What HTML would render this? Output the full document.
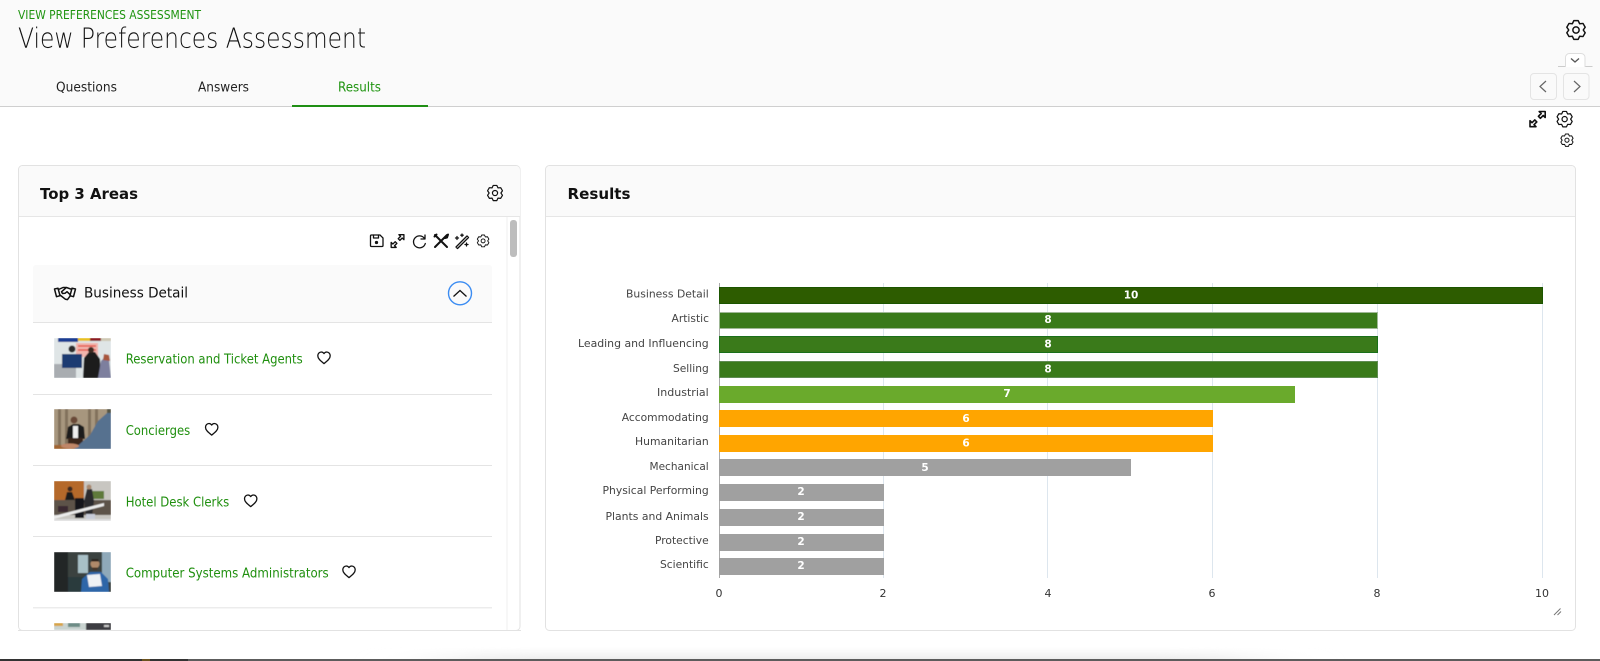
<!DOCTYPE html>
<html lang="en"><head><meta charset="utf-8"><title>View Preferences Assessment</title>
<style>
html,body{margin:0;padding:0;background:#fff;width:1600px;height:661px;overflow:hidden}
svg{display:block}
text{font-family:"DejaVu Sans","Liberation Sans",sans-serif}
.yl{font-size:11px;fill:#444;text-anchor:start}
.v{font-size:10.500px;fill:#fff;font-weight:700;text-anchor:middle}
.x{font-size:11px;fill:#333;text-anchor:middle}
.g{stroke:#dde6ee;stroke-width:1}
.item{font-size:13px;fill:#1f8f0e}
.ic{fill:none;stroke:#111;stroke-width:1.5;stroke-linejoin:round;stroke-linecap:round}
</style></head><body>
<svg width="1600" height="661" viewBox="0 0 1600 661" xmlns="http://www.w3.org/2000/svg">
<defs>
<g id="gear"><polygon points="9.5,1.3 14.5,1.3 16.15,4.8 20,4.5 22.5,8.8 20.3,12 22.5,15.2 20,19.5 16.15,19.2 14.5,22.7 9.5,22.7 7.85,19.2 4,19.5 1.5,15.2 3.7,12 1.5,8.8 4,4.5 7.85,4.8" fill="none" stroke="#111" stroke-width="1.7" stroke-linejoin="round"/><circle cx="12" cy="12" r="3.6" fill="none" stroke="#111" stroke-width="1.7"/></g>
<g id="expand"><path d="M14 2.500H21.500V10L19 7.500 15.500 11 13 8.500 16.500 5zM10 21.500H2.500V14L5 16.500 8.500 13 11 15.500 7.500 19z" fill="none" stroke="#111" stroke-width="2" stroke-linejoin="round"/></g>
<path id="heart" d="M7 12.6C3 9.4 .8 7.4 .8 4.7 .8 2.6 2.4 1 4.3 1 5.4 1 6.4 1.6 7 2.6 7.6 1.6 8.6 1 9.7 1c1.9 0 3.5 1.6 3.5 3.7 0 2.7-2.2 4.7-6.2 7.9z" fill="none" stroke="#111" stroke-width="1.3" stroke-linejoin="round"/>
<filter id="b"><feGaussianBlur stdDeviation=".45"/></filter>
<filter id="hb" x="-20%" width="140%"><feGaussianBlur stdDeviation="40 0"/></filter>
<linearGradient id="sh" x1="0" y1="0" x2="0" y2="1"><stop offset="0" stop-color="#f2f2f2" stop-opacity="0"/><stop offset="1" stop-color="#eeeeee"/></linearGradient>
<clipPath id="c1"><rect width="57" height="40"/></clipPath>
<clipPath id="c5"><rect width="57" height="7"/></clipPath>
</defs>

<!-- header -->
<rect width="1600" height="106" fill="#fafafa"/>
<rect y="106" width="1600" height="1" fill="#cfcfcf"/>
<text x="18" y="19" font-size="12" fill="#1f9410" textLength="183" lengthAdjust="spacingAndGlyphs">VIEW PREFERENCES ASSESSMENT</text>
<text x="18" y="47.5" font-size="28" font-weight="300" fill="#111" textLength="348" lengthAdjust="spacingAndGlyphs">View Preferences Assessment</text>
<text x="56" y="91.5" font-size="13" fill="#222" textLength="61" lengthAdjust="spacingAndGlyphs">Questions</text>
<text x="198" y="91.5" font-size="13" fill="#222" textLength="51" lengthAdjust="spacingAndGlyphs">Answers</text>
<text x="338" y="91.5" font-size="13" fill="#1f9410" textLength="43" lengthAdjust="spacingAndGlyphs">Results</text>
<rect x="292" y="105" width="136" height="2" fill="#1f8f14"/>

<use href="#gear" transform="translate(1565.5 19.5) scale(.875)"/>
<path d="M1558 66.5h7.5M1585 66.5h7.5" stroke="#ccc"/>
<path d="M1565.5 67v-9a4 4 0 0 1 4-4.5h11.5a4 4 0 0 1 4 4.5v9" fill="#fff" stroke="#ddd"/>
<path d="M1571 58.5l4 3.5 4-3.5" fill="none" stroke="#555" stroke-width="1.3"/>
<rect x="1530.5" y="73.5" width="26" height="26" rx="3.5" fill="#fafafa" stroke="#e4e4e4"/>
<rect x="1563.5" y="73.5" width="25.5" height="26" rx="3.5" fill="#fafafa" stroke="#e4e4e4"/>
<path d="M1546 81l-6 5.5 6 5.5M1574 81l6 5.5-6 5.5" fill="none" stroke="#666" stroke-width="1.2"/>

<use href="#expand" transform="translate(1528 109.500) scale(.8)"/>
<use href="#gear" transform="translate(1556 110.5) scale(.72)"/>
<use href="#gear" transform="translate(1560 133.2) scale(.58)"/>

<!-- left card -->
<rect x="18.5" y="165.5" width="501.5" height="465" rx="4" fill="#fff" stroke="#e2e2e2"/>
<path d="M19 216V170a4 4 0 0 1 4-4H516a4 4 0 0 1 4 4V216z" fill="#fafafa"/>
<rect x="19" y="216" width="501" height="1" fill="#e6e6e6"/>
<text x="40" y="199" font-size="15.500" font-weight="700" fill="#111" textLength="98" lengthAdjust="spacingAndGlyphs">Top 3 Areas</text>
<use href="#gear" transform="translate(486.5 184.5) scale(.71)"/>
<rect x="506.5" y="217" width="1" height="413" fill="#efefef"/>
<rect x="510" y="220" width="7" height="37" rx="3" fill="#bdbdbd"/>

<!-- toolbar -->
<g class="ic" style="stroke-width:1.3">
<path d="M371.5 235h8.5l3 3v7.5a1 1 0 0 1-1 1h-10.500a1 1 0 0 1-1-1v-9.500a1 1 0 0 1 1-1z"/><path d="M373.500 235v3h5v-3"/><circle cx="376.500" cy="242.500" r="1" fill="#111"/>
<path d="M424.500 238.500a6 6 0 1 0 .8 5M425 235v4h-4"/>
<path d="M435 235l12 12M447 235l-12 12M434.500 236.500l2-2M446 236l2-1.500-1 3-2 .5" stroke-width="2"/>
<path d="M456 247l11-11 1.500 1.500-11 11zM457 236.500v3M455.500 238h3M466.500 243v3M465 244.500h3M462 234v2.500M460.800 235.200h2.400"/>
</g>
<use href="#expand" transform="translate(389.500 233) scale(.67)"/>
<use href="#gear" transform="translate(476.500 234.300) scale(.55)"/>

<!-- accordion header -->
<path d="M33 322V268a3 3 0 0 1 3-3H489a3 3 0 0 1 3 3V322z" fill="#fafafa"/>
<rect x="33" y="322" width="459" height="1" fill="#e4e4e4"/>
<g fill="none" stroke="#111" stroke-linejoin="round" stroke-linecap="round" stroke-width="1.500">
<path d="M54.500 289l3.500-.8 2 7.500-3.500 1zM75.500 289l-3.500-.8-2 7.500 3.500 1z"/>
<path d="M58.500 289.500l4.500-2h3.500l5 1.800M60 295l5.500 4.300 2 .3 2.800-3.800"/>
<path d="M66 287.800l-4.500 4 1 1.700 2.500-.2 2-1.600 3.200 3"/>
</g>
<text x="84" y="297.300" font-size="14.500" fill="#111" textLength="104" lengthAdjust="spacingAndGlyphs">Business Detail</text>
<circle cx="460" cy="293.300" r="11.500" fill="none" stroke="#3b8cf2" stroke-width="1.400"/>
<path d="M453.500 296.500l6.500-6 6.500 6" fill="none" stroke="#111" stroke-width="1.300"/>

<!-- rows -->
<g fill="#e4e4e4"><rect x="33" y="394" width="459" height="1"/><rect x="33" y="465" width="459" height="1"/><rect x="33" y="536" width="459" height="1"/><rect x="33" y="607" width="459" height="1.500" fill="#ececec"/></g>
<text class="item" x="125.700" y="363.300" textLength="177" lengthAdjust="spacingAndGlyphs">Reservation and Ticket Agents</text>
<text class="item" x="125.700" y="435" textLength="64.500" lengthAdjust="spacingAndGlyphs">Concierges</text>
<text class="item" x="125.700" y="506.500" textLength="103.500" lengthAdjust="spacingAndGlyphs">Hotel Desk Clerks</text>
<text class="item" x="125.700" y="577.500" textLength="203" lengthAdjust="spacingAndGlyphs">Computer Systems Administrators</text>
<use href="#heart" x="317" y="351"/>
<use href="#heart" x="204.700" y="422.500"/>
<use href="#heart" x="243.700" y="494"/>
<use href="#heart" x="342" y="565"/>

<!-- thumbs -->
<g transform="translate(54 338)" clip-path="url(#c1)"><g filter="url(#b)">
<rect width="57" height="40" fill="#dfe5e6"/><rect x="4" width="20" height="4" fill="#1d3d92"/><rect x="24" width="12" height="3" fill="#e8c020"/><rect x="36" width="11" height="3" fill="#8c1f22"/><rect x="47" width="10" height="3" fill="#cfc9b5"/>
<rect x="22" y="5" width="22" height="14" fill="#f2b5ad"/><path d="M24 8h18M24 12h18" stroke="#e4584e" stroke-width="1.500"/><rect y="26" width="22" height="14" fill="#a9adb1"/><rect x="8" y="16" width="20" height="14" fill="#1d3a72"/><circle cx="18" cy="11" r="3.500" fill="#2b2a2a"/>
<path d="M29 40l1-20 5-6 6 0 5 7 1 19z" fill="#1c1c1e"/><circle cx="37" cy="12" r="3" fill="#3d2a20"/><path d="M44 40l3-17 5-5 3 4 2 18z" fill="#7d7f9e"/><path d="M49 22l1-6 5 1 1 6z" fill="#a8553a"/>
</g></g>
<g transform="translate(54 409)" clip-path="url(#c1)"><g filter="url(#b)">
<rect width="57" height="40" fill="#a7967e"/><g fill="#82715c"><rect x="4" width="3" height="40"/><rect x="11" width="3" height="40"/><rect x="34" width="3" height="40"/><rect x="41" width="3" height="40"/></g>
<path d="M12 30l2-12 5-3 6 0 5 3 1 12z" fill="#1e1c1d"/><rect x="19" y="17" width="5" height="13" fill="#eee"/><circle cx="20" cy="11" r="3.500" fill="#6b4a38"/><rect x="14" y="29" width="15" height="7" fill="#3a251b"/>
<rect y="36" width="57" height="4" fill="#a06530"/><path d="M20 40l16-14 8-14 9-8 4 0v36z" fill="#56718f"/><rect x="53" width="4" height="4" fill="#554"/><ellipse cx="16" cy="37" rx="9" ry="2.500" fill="#c08668"/>
</g></g>
<g transform="translate(54 481)" clip-path="url(#c1)"><g filter="url(#b)">
<rect width="57" height="40" fill="#c8c6c1"/><rect width="30" height="20" fill="#b5692c"/><rect x="38" y="10" width="12" height="8" fill="#5e7a3a"/>
<rect y="19" width="57" height="15" fill="#5d534a"/><path d="M11 19l2-8h5l3 8z" fill="#1c1c1f"/><circle cx="16" cy="8" r="2.500" fill="#3a2a20"/><rect x="21" y="17" width="9" height="20" fill="#15151a"/><path d="M30 20l3-12h5l2 12-2 16h-6z" fill="#2a2a2e"/><circle cx="35" cy="6" r="2.500" fill="#a8896f"/>
<path d="M0 35l50-13v3L0 38z" fill="#ececec"/><rect x="32" y="33" width="9" height="7" fill="#c8ccd8"/><rect x="4" y="25" width="10" height="6" fill="#3a2c33"/><rect y="38" width="57" height="2" fill="#ddd"/>
</g></g>
<g transform="translate(54 552)" clip-path="url(#c1)"><g filter="url(#b)">
<rect width="57" height="40" fill="#3a4240"/><rect width="14" height="40" fill="#202625"/><rect x="24" y="3" width="10" height="18" fill="#a8c0c6"/><rect x="48" width="9" height="30" fill="#8fa9b9"/><rect x="14" y="25" width="16" height="15" fill="#2c3a3d"/>
<path d="M27 40l1-13 8-7h11l7 7 1 13z" fill="#2e66a8"/><circle cx="41" cy="12" r="4.500" fill="#b08a6a"/><path d="M37.500 7h7v2.500h-7z" fill="#2a211d"/><path d="M38 15.500h6l-1 2.500h-4z" fill="#4a3428"/><path d="M33 23l13-1 2 12-13 1z" fill="#eef1f4"/>
</g></g>
<g transform="translate(54 623)" clip-path="url(#c5)"><g filter="url(#b)">
<rect width="57" height="7" fill="#c9d3d0"/><rect width="9" height="3" fill="#d7a44a"/><rect x="14" width="12" height="4" fill="#6d8c86"/><rect x="32" width="25" height="7" fill="#3c3e42"/><rect x="50" y="2" width="5" height="2" fill="#ccc"/>
</g></g>
<rect x="18" y="630" width="503" height="1" fill="#e2e2e2"/>

<!-- right card -->
<rect x="545.500" y="165.500" width="1030" height="465" rx="4" fill="#fff" stroke="#e2e2e2"/>
<path d="M546 216V170a4 4 0 0 1 4-4H1571a4 4 0 0 1 4 4V216z" fill="#fafafa"/>
<rect x="546" y="216" width="1029" height="1" fill="#e6e6e6"/>
<text x="567.500" y="199" font-size="15.500" font-weight="700" fill="#111" textLength="63" lengthAdjust="spacingAndGlyphs">Results</text>

<!-- chart -->
<path class="g" d="M883.500 283V578M1047.500 283V578M1212.500 283V578M1377.500 283V578M1542.500 283V578"/>
<path d="M719.500 283V578" stroke="#aaa"/>
<g stroke-width="1">
<rect x="719.500" y="287.500" width="823" height="16" fill="#2d5c00" stroke="#1b5500"/>
<rect x="719.500" y="312.500" width="658" height="16" fill="#3a7a1a" stroke="#9fb896"/>
<rect x="719.500" y="336.500" width="658" height="16" fill="#3a7a1a" stroke="#1a701a"/>
<rect x="719.500" y="361.500" width="658" height="16" fill="#3a7a1a" stroke="#5f8c52"/>
</g>
<rect x="719" y="386" width="576" height="17" fill="#6aaa2c"/>
<rect x="719" y="410" width="494" height="17" fill="#ffa500"/>
<rect x="719" y="435" width="494" height="17" fill="#ffa500"/>
<rect x="719" y="459" width="412" height="17" fill="#a0a0a0"/>
<rect x="719" y="484" width="165" height="17" fill="#a0a0a0"/>
<rect x="719" y="509" width="165" height="17" fill="#a0a0a0"/>
<rect x="719" y="534" width="165" height="17" fill="#a0a0a0"/>
<rect x="719" y="558" width="165" height="17" fill="#a0a0a0"/>

<text class="v" x="1131" y="298.500">10</text>
<text class="v" x="1048" y="323">8</text>
<text class="v" x="1048" y="347.500">8</text>
<text class="v" x="1048" y="372.500">8</text>
<text class="v" x="1007" y="397">7</text>
<text class="v" x="966" y="422">6</text>
<text class="v" x="966" y="446.500">6</text>
<text class="v" x="925" y="471">5</text>
<text class="v" x="801" y="495">2</text>
<text class="v" x="801" y="520">2</text>
<text class="v" x="801" y="545">2</text>
<text class="v" x="801" y="569">2</text>

<text class="yl" x="626" y="297.500" textLength="82.700" lengthAdjust="spacingAndGlyphs">Business Detail</text>
<text class="yl" x="671.500" y="322" textLength="37.500" lengthAdjust="spacingAndGlyphs">Artistic</text>
<text class="yl" x="578" y="347" textLength="130.700" lengthAdjust="spacingAndGlyphs">Leading and Influencing</text>
<text class="yl" x="673" y="372" textLength="35.700" lengthAdjust="spacingAndGlyphs">Selling</text>
<text class="yl" x="657" y="396" textLength="51.700" lengthAdjust="spacingAndGlyphs">Industrial</text>
<text class="yl" x="621.700" y="421" textLength="87" lengthAdjust="spacingAndGlyphs">Accommodating</text>
<text class="yl" x="635" y="445" textLength="73.700" lengthAdjust="spacingAndGlyphs">Humanitarian</text>
<text class="yl" x="649.500" y="470" textLength="59.200" lengthAdjust="spacingAndGlyphs">Mechanical</text>
<text class="yl" x="602.500" y="494" textLength="106.200" lengthAdjust="spacingAndGlyphs">Physical Performing</text>
<text class="yl" x="605.500" y="520" textLength="103.200" lengthAdjust="spacingAndGlyphs">Plants and Animals</text>
<text class="yl" x="655" y="544" textLength="53.700" lengthAdjust="spacingAndGlyphs">Protective</text>
<text class="yl" x="660" y="568" textLength="48.700" lengthAdjust="spacingAndGlyphs">Scientific</text>

<text class="x" x="719" y="597">0</text>
<text class="x" x="883" y="597">2</text>
<text class="x" x="1048" y="597">4</text>
<text class="x" x="1212" y="597">6</text>
<text class="x" x="1377" y="597">8</text>
<text class="x" x="1542" y="597">10</text>

<path d="M1554 615l6.500-6.500M1557.500 615l3.500-3.500" stroke="#777" stroke-width="1" fill="none"/>

<!-- bottom strip -->
<rect x="450" y="647" width="800" height="12" fill="url(#sh)" filter="url(#hb)"/>
<rect y="659" width="1600" height="2" fill="#5c5c5c"/>
<rect y="659" width="188" height="2" fill="#333"/>
<rect x="142" y="659" width="8" height="2" fill="#6b5320"/>
</svg>
</body></html>
